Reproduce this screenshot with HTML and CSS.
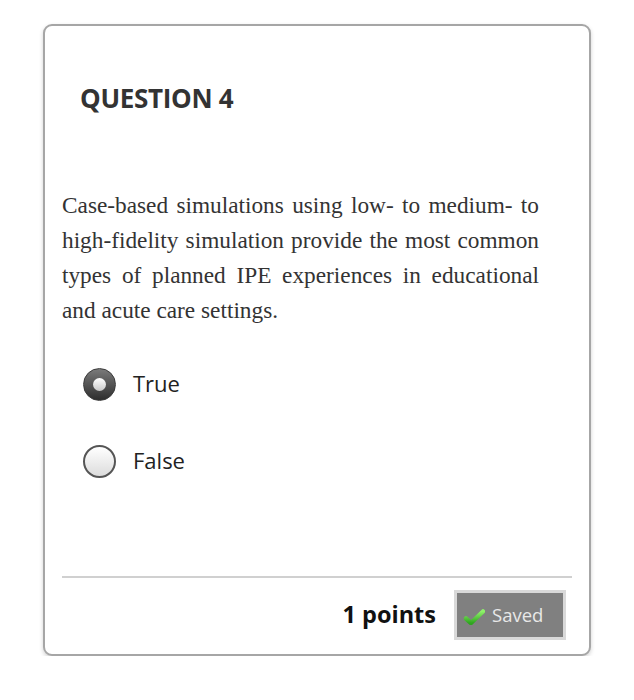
FILE: index.html
```html
<!DOCTYPE html>
<html>
<head>
<meta charset="utf-8">
<link rel="stylesheet" href="styles.css">
</head>
<body>
<div class="card">
  <h2 class="title">QUESTION 4</h2>
  <p class="question">Case-based simulations using low- to medium- to high-fidelity simulation provide the most common types of planned IPE experiences in educational and acute care settings.</p>
  <div class="options">
    <label class="option">
      <span class="radio checked"><span class="dot"></span></span>
      <span class="label">True</span>
    </label>
    <label class="option">
      <span class="radio"></span>
      <span class="label">False</span>
    </label>
  </div>
  <div class="divider"></div>
  <div class="footer">
    <span class="points">1 points</span>
    <span class="saved">
      <svg class="check" width="22" height="17" viewBox="0 0 22 17">
        <defs>
          <linearGradient id="g" x1="0" y1="0" x2="0" y2="1">
            <stop offset="0" stop-color="#8ef06a"/>
            <stop offset="1" stop-color="#2fa51f"/>
          </linearGradient>
        </defs>
        <path d="M3 10.5 L8 15 L20 3.5" fill="none" stroke="url(#g)" stroke-width="4.5" stroke-linecap="round" stroke-linejoin="round"/>
      </svg>
      <span class="saved-text">Saved</span>
    </span>
  </div>
</div>
</body>
</html>
```

FILE: styles.css
```css
html, body {
  margin: 0;
  padding: 0;
  background: #ffffff;
}

body {
  padding: 24px 0 0 43px;
  font-family: "Open Sans", "Liberation Sans", sans-serif;
}

.card {
  box-sizing: border-box;
  width: 548px;
  height: 632px;
  border: 2px solid #a6a6a6;
  border-radius: 9px;
  background: #fff;
  box-shadow: 0 2px 4px rgba(0, 0, 0, 0.18);
  padding: 0 17px 0 17px;
  display: flex;
  flex-direction: column;
}

.title {
  margin: 55px 0 0 18px;
  font-size: 26px;
  font-weight: 700;
  line-height: 35px;
  color: #333333;
  letter-spacing: -0.3px;
}

.question {
  margin: 72px 0 0 0;
  width: 477px;
  font-family: "Liberation Serif", "Times New Roman", serif;
  font-size: 23.3px;
  line-height: 35px;
  text-align: justify;
  color: #333333;
}

.options {
  margin-top: 36px;
  display: flex;
  flex-direction: column;
  gap: 37px;
  padding-left: 21px;
}

.option {
  display: flex;
  align-items: center;
  height: 40px;
  gap: 17px;
}

.radio {
  box-sizing: border-box;
  width: 33px;
  height: 33px;
  border-radius: 50%;
  border: 2px solid #555;
  background: linear-gradient(#ffffff, #dcdcdc);
  display: flex;
  align-items: center;
  justify-content: center;
}

.radio.checked {
  border: 1px solid #3a3a3a;
  background: linear-gradient(#7a7a7a, #2e2e2e);
}

.dot {
  width: 13px;
  height: 13px;
  border-radius: 50%;
  background: linear-gradient(#ffffff, #c8c8c8);
}

.label {
  font-size: 22px;
  color: #222;
  margin-top: -2px;
}

.divider {
  margin-top: 95px;
  height: 2px;
  background: #d0d0d0;
}

.footer {
  margin-top: 12px;
  margin-right: 6px;
  display: flex;
  justify-content: flex-end;
  align-items: center;
  gap: 18px;
}

.points {
  font-size: 23.5px;
  font-weight: 700;
  color: #111;
  margin-top: -3px;
}

.saved {
  box-sizing: border-box;
  width: 112px;
  height: 50px;
  border: 3px solid #d9d9d9;
  background: #808080;
  display: flex;
  align-items: center;
  padding-left: 6px;
  gap: 7px;
}

.check {
  margin-top: 2px;
}

.saved-text {
  font-size: 18.5px;
  color: #e8e8e8;
  margin-top: -2px;
}
```
